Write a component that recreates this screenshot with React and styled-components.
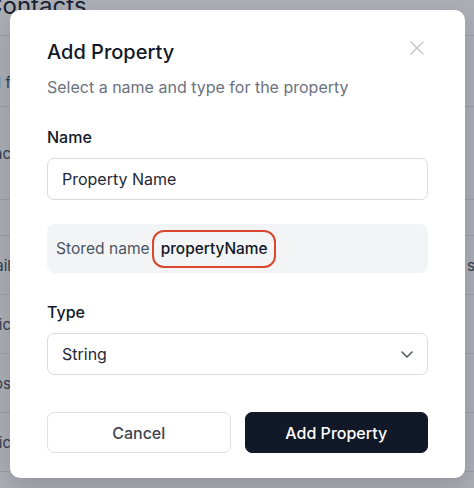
import React from "react";
import styled, { createGlobalStyle } from "styled-components";

const GlobalStyle = createGlobalStyle`
  html, body {
    margin: 0;
    padding: 0;
  }
  body {
    font-family: Inter, "Noto Sans", "Liberation Sans", sans-serif;
    -webkit-font-smoothing: antialiased;
  }
  * {
    box-sizing: border-box;
  }
`;

const Screen = styled.div`
  position: relative;
  width: 474px;
  height: 488px;
  overflow: hidden;
  background: #ffffff;
`;

// page behind the dialog, only its edges show
const Page = styled.div`
  display: flex;
  flex-direction: column;
  margin-top: -24px;
  color: #374151;
`;

const PageTitle = styled.div`
  height: 60px;
  display: flex;
  align-items: center;
  margin-left: -15px;
  font-size: 24px;
  color: #1f2937;
  border-bottom: 1px solid #e5e7eb;
`;

const Band = styled.div`
  height: ${(p) => p.h}px;
  display: flex;
  align-items: ${(p) => p.align || "center"};
  justify-content: space-between;
  padding-bottom: ${(p) => p.pb || 0}px;
  font-size: 15px;
  color: #4b5563;
  border-bottom: 1px solid #e5e7eb;
`;

const EdgeCell = styled.span`
  width: 11px;
  display: flex;
  justify-content: flex-end;
  white-space: nowrap;
`;

const RightCell = styled.span`
  white-space: nowrap;
  width: 7px;
  overflow: visible;
`;

const Backdrop = styled.div`
  position: absolute;
  inset: 0;
  background: rgba(15, 23, 42, 0.35);
`;

const Dialog = styled.div`
  position: absolute;
  left: 10px;
  top: 10px;
  width: 455px;
  background: #ffffff;
  border-radius: 10px;
  box-shadow: 0 10px 25px rgba(0, 0, 0, 0.15);
  padding: 28px 37px 25px;
  display: flex;
  flex-direction: column;
`;

const CloseButton = styled.button`
  position: absolute;
  top: 31px;
  right: 41px;
  width: 14px;
  height: 14px;
  padding: 0;
  border: none;
  background: none;
  display: flex;
  color: #c5c8cd;
`;

const Title = styled.h2`
  margin: 0;
  font-size: 20px;
  line-height: 28px;
  font-weight: 500;
  color: #111827;
`;

const Subtitle = styled.p`
  margin: 10px 0 0;
  font-size: 16px;
  line-height: 22px;
  color: #6b7280;
`;

const Label = styled.div`
  margin-top: 28px;
  font-size: 16px;
  line-height: 22px;
  font-weight: 500;
  color: #111827;
`;

const Field = styled.div`
  margin-top: 10px;
  height: 42px;
  border: 1px solid #d8dbe0;
  border-radius: 7px;
  display: flex;
  align-items: center;
  justify-content: space-between;
  padding: 0 14px;
  font-size: 16px;
  color: #1f2937;
`;

const StoredBox = styled.div`
  margin-top: 24px;
  height: 49px;
  background: #f3f4f6;
  border-radius: 8px;
  display: flex;
  align-items: center;
  padding-left: 9px;
  font-size: 15.6px;
  color: #4b5563;
`;

const Highlight = styled.span`
  margin-left: 2px;
  height: 38px;
  display: flex;
  align-items: center;
  padding: 0 7px;
  border: 2px solid #d9472f;
  border-radius: 12px;
  font-size: 15.4px;
  font-weight: 500;
  color: #111827;
`;

const Actions = styled.div`
  margin-top: 37px;
  display: grid;
  grid-template-columns: 1fr 1fr;
  gap: 14px;
`;

const Button = styled.button`
  height: 41px;
  border-radius: 7px;
  font-family: inherit;
  font-size: 16px;
  font-weight: 500;
  border: 1px solid ${(p) => (p.primary ? "#111827" : "#dfe1e5")};
  background: ${(p) => (p.primary ? "#111827" : "#ffffff")};
  color: ${(p) => (p.primary ? "#ffffff" : "#3f4450")};
`;

const rows = [
  ["Email", "s"],
  ["Topic", ""],
  ["Purpos", ""],
  ["Logic", ""],
];

export default function App() {
  return (
    <Screen>
      <GlobalStyle />
      <Page>
        <PageTitle>Contacts</PageTitle>
        <Band h={71} align="flex-end" pb={14}>
          <EdgeCell>All f</EdgeCell>
        </Band>
        <Band h={93}>
          <EdgeCell>Replac</EdgeCell>
        </Band>
        <Band h={36} />
        {rows.map(([l, r]) => (
          <Band key={l} h={59}>
            <EdgeCell>{l}</EdgeCell>
            <RightCell>{r}</RightCell>
          </Band>
        ))}
      </Page>
      <Backdrop />
      <Dialog>
        <CloseButton aria-label="Close">
          <svg width="14" height="14" viewBox="0 0 14 14" fill="none">
            <path d="M1 1L13 13M13 1L1 13" stroke="currentColor" strokeWidth="1.5" strokeLinecap="round" />
          </svg>
        </CloseButton>
        <Title>Add Property</Title>
        <Subtitle>Select a name and type for the property</Subtitle>
        <Label>Name</Label>
        <Field>Property Name</Field>
        <StoredBox>
          Stored name
          <Highlight>propertyName</Highlight>
        </StoredBox>
        <Label>Type</Label>
        <Field>
          String
          <svg width="12" height="7" viewBox="0 0 12 7" fill="none">
            <path d="M1 1L6 6L11 1" stroke="#4b5563" strokeWidth="1.5" strokeLinecap="round" strokeLinejoin="round" />
          </svg>
        </Field>
        <Actions>
          <Button>Cancel</Button>
          <Button primary>Add Property</Button>
        </Actions>
      </Dialog>
    </Screen>
  );
}
